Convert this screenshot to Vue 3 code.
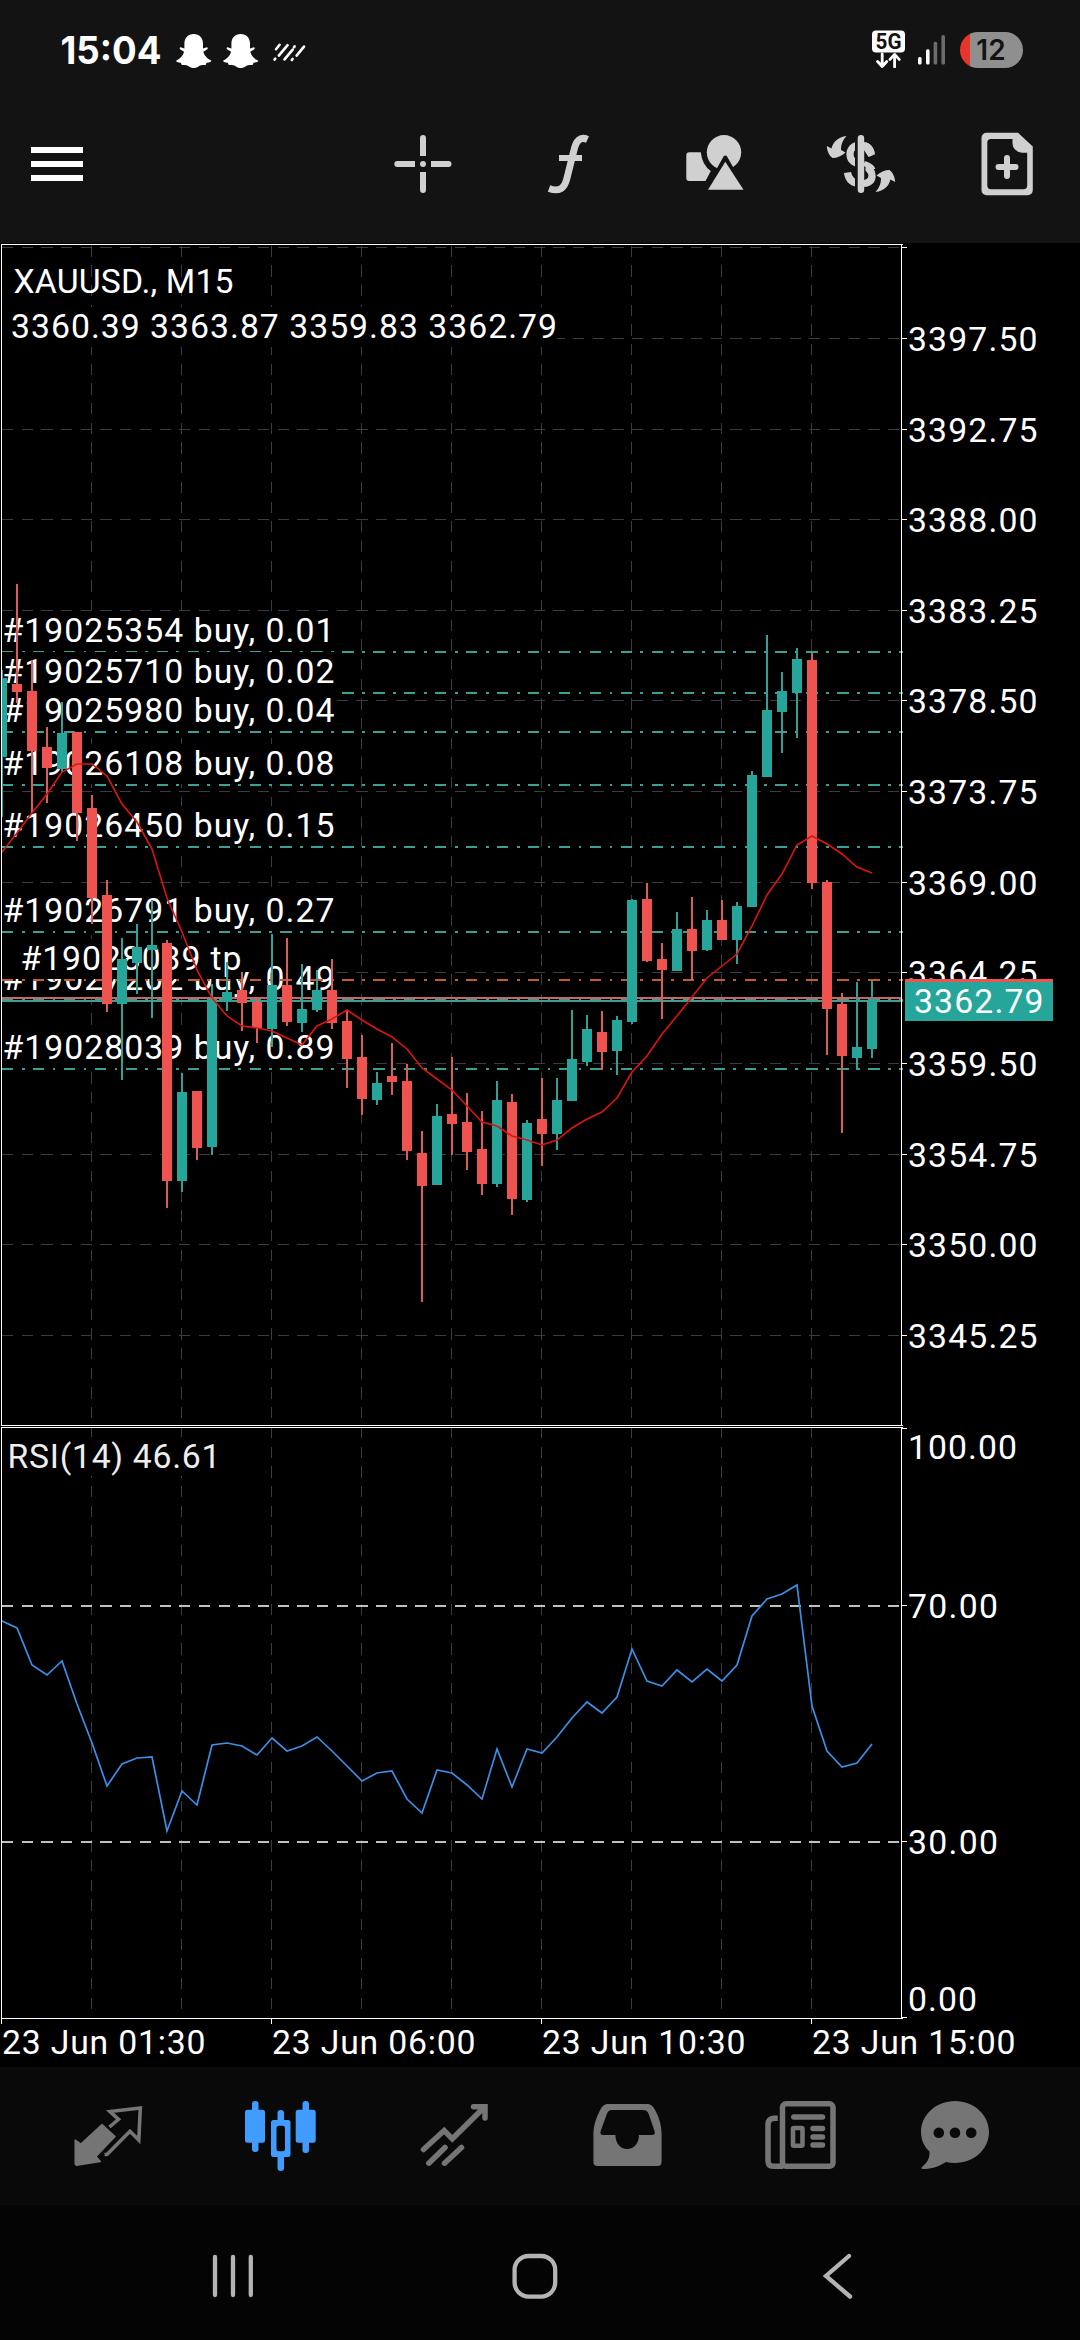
<template>
  <div class="screen">
    <header class="status-bar">
      <div class="status-left">
        <svg class="clock" width="106" height="60" viewBox="0 0 106 60">
          <text x="1.5" y="44" textLength="101" lengthAdjust="spacingAndGlyphs">15:04</text>
        </svg>
        <svg v-for="n in 2" :key="n" class="ghost" width="36" height="35" viewBox="0 0 36 35">
          <path d="M17.7 0C12 0 8.4 4 8.4 9.5v5L4.6 13.2c-1.3.2-1.2 1.6-.2 2.3l3.7 2.3C7 22 4 25 .4 26.4c-.8.9.3 1.6 4.4 2.4l1 2.2c2.5 0 4.8-.2 6.5.9 3.5 2.7 7.3 2.7 10.8 0 1.7-1.1 4-.9 6.5-.9l1-2.2c4.1-.8 5.2-1.5 4.4-2.4-3.6-1.4-6.6-4.4-7.7-8.6l3.7-2.3c1-.7 1.1-2.1-.2-2.3L27 14.5v-5C27 4 23.4 0 17.7 0z" fill="#fff" />
        </svg>
        <svg class="slashes" width="34" height="20" viewBox="0 0 34 20">
          <path d="M4 7.2L7.6 2.8M2.5 17.6l.8-.9M6.8 13.6L15.6 3.2M12.5 17.4l8.2-9.8M22 5.2l.6-.8M19.8 18l.8-1M24.6 13.6l7.4-9" fill="none" stroke="#fff" stroke-width="2.6" stroke-linecap="round" />
        </svg>
      </div>
      <div class="status-right">
        <svg class="network" width="34" height="38" viewBox="0 0 34 38">
          <rect x="0" y="0.5" width="33" height="22" rx="4" fill="#fff" />
          <text x="3.5" y="19" textLength="26" lengthAdjust="spacingAndGlyphs">5G</text>
          <path d="M10.2 24v12M5.6 31.5l4.6 5 4.6-5M22.6 37V25M18 29.4l4.6-5 4.6 5" fill="none" stroke="#fff" stroke-width="2.8" stroke-linecap="round" stroke-linejoin="round" />
        </svg>
        <svg class="signal" width="28" height="30" viewBox="0 0 28 30">
          <rect x="0" y="22" width="3.6" height="7.5" rx="1.5" fill="#fff" />
          <rect x="8" y="14.3" width="3.6" height="15.2" rx="1.5" fill="#fff" />
          <rect x="15.6" y="6.7" width="3.6" height="22.8" rx="1.5" fill="#6b6b6b" />
          <rect x="23.4" y="0" width="3.6" height="29.5" rx="1.5" fill="#6b6b6b" />
        </svg>
        <div class="battery"><span>12</span></div>
      </div>
    </header>

    <nav class="toolbar">
      <button class="menu" aria-label="Menu"><i></i><i></i><i></i></button>
      <div class="tools">
        <button>
          <svg width="80" height="80" viewBox="0 0 80 80" fill="#d0d0d0">
            <path d="M37 32V14q0-3 3-3t3 3v18zM37 48v18q0 3 3 3t3-3V48zM32 37H14.3q-3 0-3 3t3 3H32zM48 37h17.5q3 0 3 3t-3 3H48z" />
            <circle cx="40" cy="40" r="3" />
          </svg>
        </button>
        <button>
          <svg width="80" height="80" viewBox="0 0 80 80" fill="none" stroke="#d0d0d0">
            <path d="M58.5 15.5C51 12 47 17 45 26L38 54C35.5 65 30 68 20 64.5" stroke-width="7" />
            <path d="M30 34h23" stroke-width="6" />
          </svg>
        </button>
        <button>
          <svg width="80" height="80" viewBox="0 0 80 80" fill="#d0d0d0">
            <path d="M14.3 28.3H25.8Q27 41 35.8 47L30.5 57H14.3a3 3 0 0 1-3-3V31.3a3 3 0 0 1 3-3z" />
            <circle cx="49" cy="28.3" r="17.2" />
            <path d="M50.3 33.5L70 68H31z" fill="#131313" stroke="#131313" stroke-width="4" stroke-linejoin="round" />
            <path d="M50.3 37.7L68.5 65.7H33z" />
          </svg>
        </button>
        <button>
          <svg width="80" height="80" viewBox="0 0 80 80" fill="#d0d0d0">
            <path d="M50.5 31C49.5 24 45 21 39 21C32 21 29 25.500 29 30.5C29 37 34 39 40 41C47 43 51 46 51 52C51 57.5 47 59.5 40 59.5C32 59.5 27.5 56 26.5 48.5" fill="none" stroke="#d0d0d0" stroke-width="7.2" />
            <rect x="34" y="10" width="10.5" height="60" fill="#131313" />
            <path d="M43 39.5q8 2.500 9 6" fill="none" stroke="#d0d0d0" stroke-width="5" />
            <path d="M43 18q8 1 10.5 10l-2 3.5-4 1.5L43 26zM43 56q5-1 5.5-4l6 0Q54 61 43 63z" />
            <rect x="36.7" y="11" width="6.5" height="58" rx="3.2" />
            <path id="swap" d="M25.5 12C17 13 12 18 10.5 24.5L5.800 22C6 27 8.5 32 11.5 34C16 34 21 32 24.5 28.5L20 26C20 20 22 16 25.5 12z" />
            <use href="#swap" transform="rotate(180 40 40)" />
          </svg>
        </button>
        <button>
          <svg width="80" height="80" viewBox="0 0 80 80" fill="#d0d0d0">
            <path fill-rule="evenodd" d="M19.5 8.7H51L65.8 22.5V66.3a5 5 0 0 1-5 5H19.5a5 5 0 0 1-5-5V13.7a5 5 0 0 1 5-5zM24 15a3.7 3.7 0 0 0-3.7 3.7V61.6a3.7 3.7 0 0 0 3.7 3.7H56.5a3.7 3.7 0 0 0 3.7-3.7V28.7H55Q45.5 27 45.5 19V15z" />
            <path d="M40 34v18M31.5 43h17" stroke="#d0d0d0" stroke-width="6" stroke-linecap="round" />
          </svg>
        </button>
      </div>
    </nav>

    <main>
      <svg class="chart" width="1080" height="1824" viewBox="0 243 1080 1824">
        <g class="grid">
          <line v-for="y in gridRows" :key="'r' + y" x1="2" x2="901" :y1="y" :y2="y" />
          <line v-for="x in gridCols" :key="'c' + x" :x1="x" :x2="x" y1="245.6" y2="1425" />
          <line v-for="x in gridCols" :key="'s' + x" :x1="x" :x2="x" y1="1426.9" y2="2018" />
        </g>

        <!-- title and OHLC -->
        <text x="13.5" y="293" textLength="220">XAUUSD., M15</text>
        <rect x="2" y="307" width="555" height="40" fill="#000" />
        <text x="11" y="338" textLength="546">3360.39 3363.87 3359.83 3362.79</text>

        <!-- open positions -->
        <g v-for="o in orders" :key="o.label">
          <line class="level" :class="o.kind" x1="2" x2="903" :y1="o.y" :y2="o.y" />
          <rect x="2" :y="o.y - 41" :width="o.len + (o.x - 2) + 1" height="40" fill="#000" />
          <text :x="o.x" :y="o.y - 10" :textLength="o.len">{{ o.label }}</text>
        </g>
        <line class="ask" x1="2" x2="902" y1="998" y2="998" />
        <line class="bid" x1="2" x2="903" y1="1001" y2="1001" />

        <g v-for="(c, i) in candles" :key="i" :class="c[0] ? 'up' : 'down'">
          <rect class="wick" :x="barX(i) - 1" :y="c[1]" width="2" :height="c[4] - c[1]" />
          <rect :x="Math.max(barX(i) - 5, 2)" :y="c[2]" :width="i ? 10 : 5" :height="c[3] - c[2]" />
        </g>
        <polyline class="ma" :points="toPoints(average)" />

        <!-- RSI window -->
        <rect x="5" y="1437" width="214" height="39" fill="#000" />
        <text class="caption" x="7.5" y="1467.5" textLength="213">RSI(14) 46.61</text>
        <line class="rsi-level" x1="2" x2="901" y1="1606" y2="1606" />
        <line class="rsi-level" x1="2" x2="901" y1="1842" y2="1842" />
        <polyline class="rsi" :points="toPoints(rsi)" />

        <g class="frame">
          <path d="M1.5 1425.5V244.5H903M901.5 244.5V1425.5M1 1425.5H903" />
          <path d="M1.5 2024V1427.5H903M901.5 1427.5V2018.5M1 2018.5H903" />
          <line v-for="y in ticks" :key="'t' + y" x1="902" x2="907" :y1="y" :y2="y" />
          <line v-for="d in dates" :key="'d' + d.x" :x1="d.x" :x2="d.x" y1="2018" y2="2024" />
        </g>

        <text v-for="(y, i) in gridRows.slice(1)" :key="'p' + y" x="908" :y="y + 12.5" textLength="129.5">{{ (3397.5 - i * 4.75).toFixed(2) }}</text>
        <text v-for="s in scale" :key="s.label" x="908" :y="s.y" :textLength="s.len">{{ s.label }}</text>
        <text v-for="d in dates" :key="d.label" :x="d.x + 0.5" y="2054" textLength="203.5">{{ d.label }}</text>

        <rect x="905" y="979" width="148" height="3" fill="#ef5350" />
        <rect x="905" y="982" width="148" height="39" fill="#26a69a" />
        <text x="914" y="1013" textLength="129.5">3362.79</text>
      </svg>
    </main>

    <nav class="tabs">
      <button>
        <svg width="80" height="80" viewBox="0 0 80 80">
          <path d="M34 28.5L47 40.5L28 60.5L32.3 65.5L8.4 69.2L7.2 68V44L12.9 48z" fill="#757575" stroke="#757575" stroke-width="1.5" stroke-linejoin="round" />
          <path d="M41.5 31L50.5 23.3L42 15.5L72.3 12L70.8 44L62 35.2L39 58.5H36.5" fill="none" stroke="#757575" stroke-width="3.6" />
        </svg>
      </button>
      <button>
        <svg width="80" height="80" viewBox="0 0 80 80" fill="#419cff">
          <rect x="11" y="5" width="6.5" height="51" rx="3" />
          <rect x="4" y="13.7" width="20" height="33" rx="2.5" />
          <rect x="61.5" y="5" width="6.5" height="52" rx="3" />
          <rect x="54.7" y="13.7" width="20" height="33" rx="2.5" />
          <path fill-rule="evenodd" d="M36.5 24v-7q0-3 3.25-3t3.25 3v7h4q2.5 0 2.5 2.5v32q0 2.5-2.5 2.5h-4v11q0 3-3.25 3t-3.25-3V61h-4q-2.5 0-2.5-2.5v-32q0-2.5 2.5-2.5zM38 29.7q-2.5 0-2.5 2.5v20.5q0 2.5 2.5 2.5h3.5q2.5 0 2.5-2.5V32.2q0-2.5-2.5-2.5z" />
        </svg>
      </button>
      <button>
        <svg width="80" height="80" viewBox="0 0 80 80" fill="none" stroke="#757575" stroke-width="5.5" stroke-linecap="round">
          <path d="M8.5 53.5L29.2 34.5L37.3 42.8L69.5 11M58.5 10.7H70V22M13.8 67.2L30 51.5M29.5 67.2L46.5 51.5" />
        </svg>
      </button>
      <button>
        <svg width="80" height="80" viewBox="0 0 80 80" fill="#757575">
          <path fill-rule="evenodd" d="M20.5 8H58.5C62.5 8 64.5 9.5 66.5 13C71 20.5 73.6 30 73.6 38V66a4 4 0 0 1-4 4H9.4a4 4 0 0 1-4-4V38C5.4 30 8.5 20.5 12.7 13C14.7 9.5 16.5 8 20.5 8zM24.5 14C21.5 14 20 15 19 17.5L12.5 35.5C12 38 13 39 15 39H27.4C27.4 47 32.3 53 39.2 53S51 47 51 39H64.2C66.3 39 67.2 38 66.7 35.5L60.5 17.5C59.5 15 57.5 14 54.5 14z" />
        </svg>
      </button>
      <button>
        <svg width="80" height="80" viewBox="0 0 80 80" fill="none" stroke="#757575" stroke-width="5.5">
          <rect x="21.5" y="7.8" width="50.5" height="62.5" rx="3.5" />
          <path d="M14 19.5V22.3Q7 22.3 7 28.5V64.5Q7 70.3 12 70.3H22" />
          <path d="M32.8 21H61.5M52 32.6H61.5M52 41H61.5M52 49H61.5" stroke-linecap="round" />
          <rect x="32" y="32" width="9.5" height="17.7" rx="1" stroke-width="4.6" />
        </svg>
      </button>
      <button>
        <svg width="80" height="80" viewBox="0 0 80 80" fill="#757575">
          <path d="M40 5C59 5 74 19 74 36S59 67 40 67Q35 67 31 66C24 70.5 17 73 8 73C6 73 5.8 72 7.5 70.5C12 67 15 62 14.5 55.5C9 50.5 6 43.5 6 36C6 19 21 5 40 5z" />
          <g fill="#090909">
            <circle cx="23.8" cy="36.7" r="5.3" />
            <circle cx="40" cy="36.7" r="5.3" />
            <circle cx="56.2" cy="36.7" r="5.3" />
          </g>
        </svg>
      </button>
    </nav>

    <nav class="system-nav">
      <svg width="56" height="56" viewBox="0 0 56 56" fill="none" stroke="#b4b4b4" stroke-width="4.3" stroke-linecap="round">
        <path d="M10 9V47M28 9V47M45.8 9V47" />
      </svg>
      <svg width="56" height="56" viewBox="0 0 56 56" fill="none" stroke="#b4b4b4" stroke-width="4.3">
        <rect x="7.6" y="8" width="40.6" height="40.6" rx="14" />
      </svg>
      <svg width="56" height="56" viewBox="0 0 56 56" fill="none" stroke="#b4b4b4" stroke-width="4.3" stroke-linecap="round">
        <path d="M40 8L17 28L41 48.5" />
      </svg>
    </nav>
  </div>
</template>

<script setup>
const gridRows = [247.5, 338.5, 429.5, 519.5, 610.5, 700.5, 791.5, 882.5, 972.5, 1063.5, 1154.5, 1244.5, 1335.5]
const gridCols = Array.from({ length: 9 }, (_, i) => 91.5 + i * 90)
const ticks = [...gridRows, 1428.5, 1605.5, 1841.5, 2017.5]

const dates = [
  { x: 1.5, label: '23 Jun 01:30' },
  { x: 271.5, label: '23 Jun 06:00' },
  { x: 541.5, label: '23 Jun 10:30' },
  { x: 811.5, label: '23 Jun 15:00' }
]

const scale = [
  { label: '100.00', y: 1459, len: 109 },
  { label: '70.00', y: 1618, len: 90 },
  { label: '30.00', y: 1854, len: 90 },
  { label: '0.00', y: 2011, len: 69 }
]

// drawn in this order, each label blanks what is behind it
const orders = [
  { label: '#19025354 buy, 0.01', y: 652, x: 2.5, len: 332 },
  { label: '#19025710 buy, 0.02', y: 693, x: 2.5, len: 332 },
  { label: '#19025980 buy, 0.04', y: 732, x: 2.5, len: 332 },
  { label: '#19026108 buy, 0.08', y: 785, x: 2.5, len: 332 },
  { label: '#19026450 buy, 0.15', y: 847, x: 2.5, len: 332 },
  { label: '#19026791 buy, 0.27', y: 932, x: 2.5, len: 332 },
  { label: '#19027202 buy, 0.49', y: 1000, x: 2.5, len: 332 },
  { label: '#19028039 buy, 0.89', y: 1069, x: 2.5, len: 332 },
  { label: '#19028039 tp', y: 980, x: 20.5, len: 221, kind: 'tp' }
]

// [up, high, body top, body bottom, low]
const candles = [
  [1, 670, 678, 757, 817], [0, 584, 684, 692, 703], [0, 660, 691, 751, 813], [0, 727, 747, 768, 803],
  [1, 702, 733, 769, 772], [0, 732, 732, 813, 841], [0, 795, 808, 898, 924], [0, 880, 895, 1004, 1012],
  [1, 938, 959, 1004, 1080], [1, 924, 947, 963, 994], [1, 900, 945, 950, 1018], [0, 940, 943, 1181, 1208],
  [1, 1073, 1092, 1181, 1192], [0, 1091, 1091, 1148, 1160], [1, 984, 999, 1147, 1155], [1, 962, 992, 1001, 1011],
  [0, 972, 990, 1003, 1031], [0, 997, 1002, 1028, 1043], [1, 934, 985, 1029, 1047], [0, 938, 985, 1022, 1026],
  [1, 964, 1009, 1023, 1032], [1, 970, 990, 1010, 1012], [0, 959, 990, 1023, 1029], [0, 1011, 1021, 1059, 1088],
  [0, 1035, 1057, 1099, 1115], [1, 1072, 1083, 1100, 1105], [0, 1043, 1076, 1082, 1095], [0, 1064, 1081, 1151, 1160],
  [0, 1131, 1153, 1186, 1302], [1, 1104, 1116, 1185, 1185], [0, 1057, 1114, 1124, 1155], [0, 1093, 1122, 1152, 1170],
  [0, 1111, 1149, 1184, 1195], [1, 1081, 1100, 1184, 1187], [0, 1094, 1102, 1199, 1215], [1, 1120, 1123, 1200, 1202],
  [0, 1078, 1119, 1134, 1166], [1, 1078, 1100, 1134, 1150], [1, 1010, 1059, 1101, 1101], [1, 1015, 1029, 1062, 1066],
  [0, 1011, 1032, 1052, 1070], [1, 1016, 1020, 1051, 1075], [1, 899, 900, 1022, 1024], [0, 883, 899, 961, 962],
  [0, 943, 959, 970, 1019], [1, 912, 929, 971, 971], [0, 897, 929, 951, 980], [1, 910, 920, 950, 951],
  [0, 900, 920, 940, 940], [1, 902, 906, 940, 964], [1, 771, 775, 907, 907], [1, 635, 710, 777, 777],
  [1, 672, 691, 712, 753], [1, 648, 659, 693, 738], [0, 653, 660, 883, 889], [0, 880, 882, 1009, 1055],
  [0, 993, 1004, 1056, 1133], [1, 982, 1047, 1058, 1070], [1, 981, 1000, 1049, 1058]
]

const average = [
  852, 833, 813, 794, 772, 764, 764, 776, 804, 822, 849, 898, 932, 970, 998, 1016, 1026, 1028, 1031, 1038,
  1045, 1026, 1019, 1010, 1020, 1029, 1037, 1049, 1068, 1079, 1090, 1106, 1122, 1126, 1136, 1140, 1145, 1140, 1128, 1119,
  1112, 1098, 1072, 1056, 1034, 1016, 997, 978, 966, 954, 926, 895, 874, 845, 836, 844, 854, 867, 873
]

const rsi = [
  1621, 1628, 1665, 1675, 1661, 1704, 1743, 1786, 1764, 1758, 1757, 1831, 1791, 1805, 1745, 1743, 1746, 1755, 1738, 1751,
  1746, 1737, 1751, 1766, 1781, 1773, 1771, 1799, 1813, 1770, 1773, 1785, 1799, 1749, 1787, 1749, 1753, 1737, 1718, 1702,
  1713, 1697, 1649, 1681, 1686, 1670, 1682, 1669, 1681, 1665, 1616, 1599, 1594, 1585, 1706, 1751, 1767, 1763, 1744
]

const barX = i => 2 + i * 15
const toPoints = values => values.map((y, i) => `${barX(i)},${y}`).join(' ')
</script>

<style>
body {
  margin: 0;
  background: #000;
}
</style>

<style scoped>
.screen {
  display: flex;
  flex-direction: column;
  width: 1080px;
  height: 2340px;
  background: #000;
  color: #fff;
  font-family: Roboto, "Noto Sans", sans-serif;
}

svg {
  display: block;
  flex: none;
}

button {
  display: flex;
  align-items: center;
  justify-content: center;
  padding: 0;
  border: none;
  background: none;
}

.status-bar {
  display: flex;
  justify-content: space-between;
  align-items: flex-start;
  box-sizing: border-box;
  height: 85px;
  padding: 20px 57.5px 0 59px;
  background: #131313;
}

.status-left,
.status-right {
  display: flex;
}

.clock text {
  font: 700 38px Inter, sans-serif;
  fill: #fff;
}

.ghost {
  margin: 14px 0 0 11px;
}

.slashes {
  margin: 22px 0 0 13px;
}

.network {
  margin-top: 10px;
}

.network text {
  font: 700 22px Roboto, sans-serif;
  fill: #131313;
}

.signal {
  margin: 15px 14px 0 12px;
}

.battery {
  display: flex;
  align-items: center;
  justify-content: center;
  width: 63px;
  height: 36px;
  margin-top: 12px;
  border-radius: 18px;
  background: linear-gradient(90deg, #e8352b 10px, #8f8f8f 10px);
  color: #131313;
  font: 600 28px Inter, sans-serif;
}

.toolbar {
  display: flex;
  height: 158px;
  background: #131313;
}

.menu {
  flex-direction: column;
  gap: 8px;
  width: 52px;
  margin-left: 31px;
}

.menu i {
  width: 52px;
  height: 6px;
  background: #fff;
}

.tools {
  display: flex;
  margin-left: auto;
}

.tools button {
  width: 146px;
}

.chart text {
  font-size: 33.75px;
  fill: #fff;
}

.chart .caption {
  fill: #eee;
}

.grid line {
  stroke: #3b3b45;
  stroke-width: 1;
  stroke-dasharray: 11.25 8.4375;
  shape-rendering: crispEdges;
}

.level {
  stroke: #39a096;
  stroke-width: 2;
  stroke-dasharray: 11.25 8.4375 2.8125 8.4375;
  shape-rendering: crispEdges;
}

.level.tp {
  stroke: #c8592f;
}

.ask {
  stroke: #cb6561;
  stroke-width: 2;
}

.bid {
  stroke: #3c9f96;
  stroke-width: 2;
}

.up {
  fill: #26a69a;
}

.down {
  fill: #ef5350;
}

.up .wick {
  fill: #359f95;
}

.down .wick {
  fill: #d95d5a;
}

.ma {
  fill: none;
  stroke: #dd1512;
  stroke-width: 1.6;
}

.rsi {
  fill: none;
  stroke: #3c8fe6;
  stroke-width: 1.7;
}

.rsi-level {
  stroke: #c0c0c0;
  stroke-width: 2;
  stroke-dasharray: 11.25 8.4375;
  shape-rendering: crispEdges;
}

.frame {
  fill: none;
  stroke: #fff;
  stroke-width: 1;
  shape-rendering: crispEdges;
}

.tabs {
  display: grid;
  grid-template-columns: repeat(5, 173.3px) 134px;
  height: 138px;
  padding-left: 21.5px;
  background: #090909;
}

.system-nav {
  display: grid;
  grid-template-columns: repeat(3, 302px);
  justify-items: center;
  align-items: start;
  box-sizing: border-box;
  height: 135px;
  padding: 43px 0 0 82px;
  background: #040404;
}
</style>
